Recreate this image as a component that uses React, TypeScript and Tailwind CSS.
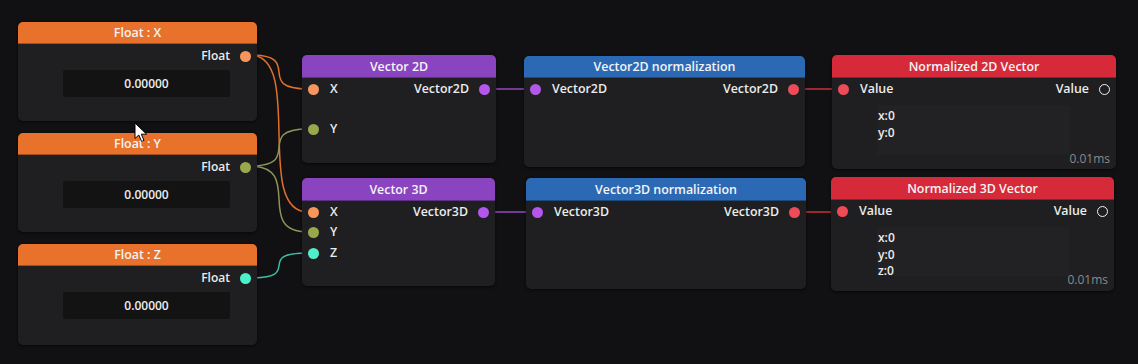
import React from "react";

const FONT = "font-['Open_Sans','Noto_Sans',sans-serif]";

function Port({ color, hollow }: { color: string; hollow?: boolean }) {
  if (hollow) {
    return <span className="block w-[11px] h-[11px] rounded-full border-[1.5px] border-[#f2f2f2] shrink-0" />;
  }
  return <span className={`block w-[11px] h-[11px] rounded-full shrink-0 ${color}`} />;
}

function Node({
  className,
  header,
  title,
  children,
}: {
  className: string;
  header: string;
  title: string;
  children?: React.ReactNode;
}) {
  return (
    <div className={`absolute rounded-[5px] bg-[#1f1f21] overflow-hidden shadow-[0_1px_3px_rgba(0,0,0,0.6)] flex flex-col ${className}`}>
      <div className={`flex items-center justify-center pt-[2px] text-[12.4px] font-semibold text-[#f4f4f4] border-b border-black/30 shrink-0 ${header}`}>
        {title}
      </div>
      {children}
    </div>
  );
}

function FloatNode({ className, title, port }: { className: string; title: string; port: string }) {
  return (
    <Node className={className} header="h-[22px] bg-[#e8722b]" title={title}>
      <div className="h-[22px] mt-[1px] flex items-center justify-end pr-[6px] gap-[10px] text-[12px] font-semibold text-[#ececec]">
        <span>Float</span>
        <Port color={port} />
      </div>
      <div className="mt-[3px] ml-[45px] mr-[27px] h-[27px] bg-[#131314] rounded-[2px] flex items-center justify-center text-[12px] font-semibold text-[#ededed]">
        0.00000
      </div>
    </Node>
  );
}

function InRow({ color, label, className = "" }: { color: string; label: string; className?: string }) {
  return (
    <div className={`h-[21px] flex items-center pl-[6px] gap-[11px] text-[12.4px] font-semibold text-[#ececec] ${className}`}>
      <Port color={color} />
      <span>{label}</span>
    </div>
  );
}

function IORow({
  inColor,
  inLabel,
  outColor,
  outLabel,
  hollow,
  className = "",
}: {
  inColor: string;
  inLabel: string;
  outColor: string;
  outLabel: string;
  hollow?: boolean;
  className?: string;
}) {
  return (
    <div className={`h-[21px] mt-[1px] flex items-center justify-between pl-[6px] pr-[6px] text-[12.4px] font-semibold text-[#ececec] shrink-0 ${className}`}>
      <div className="flex items-center gap-[11px]">
        <Port color={inColor} />
        <span>{inLabel}</span>
      </div>
      <div className="flex items-center gap-[10px]">
        <span>{outLabel}</span>
        <Port color={outColor} hollow={hollow} />
      </div>
    </div>
  );
}

function Cursor() {
  return (
    <svg className="absolute left-[134px] top-[122px]" width="15" height="22" viewBox="0 0 15 22">
      <path d="M1 1 L1 16.5 L4.8 13 L7.6 19.5 L10 18.4 L7.3 12.2 L12.6 12.2 Z" fill="#ffffff" stroke="#000000" strokeWidth="1" strokeLinejoin="round" />
    </svg>
  );
}

function wire(x1: number, y1: number, x2: number, y2: number) {
  const d = Math.max(20, (x2 - x1) * 0.95);
  return `M${x1} ${y1} C${x1 + d} ${y1} ${x2 - d} ${y2} ${x2} ${y2}`;
}

function Wires() {
  const lines: { d: string; c: string }[] = [
    { d: wire(250, 55, 308, 89), c: "#e06f2c" },
    { d: wire(250, 55, 308, 212), c: "#e06f2c" },
    { d: wire(250, 166, 308, 129), c: "#8f9457" },
    { d: wire(250, 166, 308, 232), c: "#8f9457" },
    { d: wire(250, 278, 308, 253), c: "#3dbfa5" },
    { d: wire(489, 89, 531, 89), c: "#9647c4" },
    { d: wire(489, 212, 531, 212), c: "#9647c4" },
    { d: wire(798, 89, 838, 89), c: "#c8303c" },
    { d: wire(798, 212, 838, 212), c: "#c8303c" },
  ];
  return (
    <svg className="absolute inset-0" width="1138" height="364" viewBox="0 0 1138 364">
      {lines.map((l, i) => (
        <path key={i} d={l.d} fill="none" stroke={l.c} strokeWidth="1.5" />
      ))}
    </svg>
  );
}

export default function App() {
  return (
    <div className={`relative w-[1138px] h-[364px] bg-[#111113] overflow-hidden ${FONT}`}>
      <Wires />

      <FloatNode className="left-[18px] top-[22px] w-[239px] h-[99px]" title="Float : X" port="bg-[#f7965c]" />
      <FloatNode className="left-[18px] top-[133px] w-[239px] h-[99px]" title="Float : Y" port="bg-[#9aa74c]" />
      <FloatNode className="left-[18px] top-[244px] w-[239px] h-[101px]" title="Float : Z" port="bg-[#4ff0c9]" />

      <Node className="left-[302px] top-[55px] w-[194px] h-[108px]" header="h-[23px] bg-[#8b44bf]" title="Vector 2D">
        <IORow inColor="bg-[#f7965c]" inLabel="X" outColor="bg-[#b357ea]" outLabel="Vector2D" />
        <InRow color="bg-[#9aa74c]" label="Y" className="mt-[19px]" />
      </Node>

      <Node className="left-[302px] top-[178px] w-[193px] h-[108px]" header="h-[23px] bg-[#8b44bf]" title="Vector 3D">
        <IORow inColor="bg-[#f7965c]" inLabel="X" outColor="bg-[#b357ea]" outLabel="Vector3D" />
        <InRow color="bg-[#9aa74c]" label="Y" className="-mt-[1px]" />
        <InRow color="bg-[#4ff0c9]" label="Z" />
      </Node>

      <Node className="left-[524px] top-[56px] w-[281px] h-[111px]" header="h-[22px] bg-[#2b69b4]" title="Vector2D normalization">
        <IORow inColor="bg-[#b357ea]" inLabel="Vector2D" outColor="bg-[#ef4a58]" outLabel="Vector2D" />
      </Node>

      <Node className="left-[526px] top-[178px] w-[280px] h-[111px]" header="h-[23px] bg-[#2b69b4]" title="Vector3D normalization">
        <IORow inColor="bg-[#b357ea]" inLabel="Vector3D" outColor="bg-[#ef4a58]" outLabel="Vector3D" />
      </Node>

      <Node className="left-[832px] top-[55px] w-[284px] h-[114px]" header="h-[23px] bg-[#d6293a]" title="Normalized 2D Vector">
        <IORow inColor="bg-[#ef4a58]" inLabel="Value" outColor="" outLabel="Value" hollow />
        <div className="mt-[5px] ml-[45px] w-[193px] h-[50px] bg-[#222224] pt-[3px] pl-[1px] text-[12px] leading-[16.5px] font-semibold text-[#ececec]">
          <div>x:0</div>
          <div>y:0</div>
        </div>
        <div className="-mt-[3px] flex justify-end pr-[6px] text-[12px] leading-[14px] text-[#8a8a8c]">0.01ms</div>
      </Node>

      <Node className="left-[831px] top-[177px] w-[283px] h-[114px]" header="h-[23px] bg-[#d6293a]" title="Normalized 3D Vector">
        <IORow inColor="bg-[#ef4a58]" inLabel="Value" outColor="" outLabel="Value" hollow />
        <div className="mt-[5px] ml-[46px] w-[192px] h-[49px] bg-[#222224] pt-[3px] pl-[1px] text-[12px] leading-[16.5px] font-semibold text-[#ececec]">
          <div>x:0</div>
          <div>y:0</div>
          <div>z:0</div>
        </div>
        <div className="-mt-[3px] flex justify-end pr-[6px] text-[12px] leading-[14px] text-[#8a8a8c]">0.01ms</div>
      </Node>

      <Cursor />
    </div>
  );
}
